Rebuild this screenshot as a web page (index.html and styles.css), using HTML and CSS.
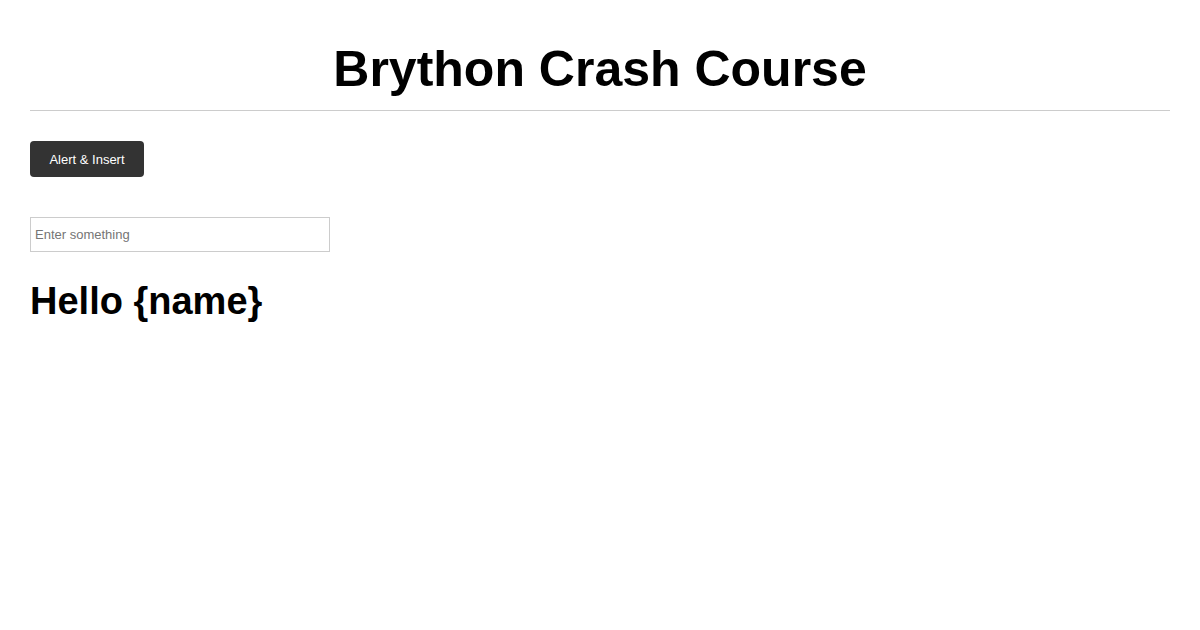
FILE: index.html
```html
<!DOCTYPE html>
<html lang="en">
<head>
<meta charset="utf-8">
<title>Brython Crash Course</title>
<link rel="stylesheet" href="styles.css">
</head>
<body>
<div class="page">
  <header class="header">
    <h1 class="title">Brython Crash Course</h1>
  </header>
  <div class="actions">
    <button class="btn" type="button">Alert &amp; Insert</button>
  </div>
  <div class="field">
    <input class="text-input" type="text" placeholder="Enter something">
  </div>
  <h2 class="greeting">Hello {name}</h2>
</div>
</body>
</html>
```

FILE: styles.css
```css
html, body {
  margin: 0;
  padding: 0;
  background: #fff;
}
body {
  font-family: "Liberation Sans", Arial, sans-serif;
  color: #000;
}
.page {
  padding: 39px 30px 0;
}
.header {
  border-bottom: 1px solid #ccc;
  padding-bottom: 11px;
}
.title {
  margin: 0;
  font-size: 50px;
  line-height: 60px;
  font-weight: bold;
  text-align: center;
}
.actions {
  margin-top: 30px;
}
.btn {
  display: block;
  width: 114px;
  height: 36px;
  background: #333;
  color: #fff;
  border: 0;
  border-radius: 4px;
  font-family: "Liberation Sans", Arial, sans-serif;
  font-size: 13px;
  padding: 0;
  cursor: pointer;
}
.field {
  margin-top: 40px;
}
.text-input {
  display: block;
  box-sizing: border-box;
  width: 300px;
  height: 35px;
  border: 1px solid #ccc;
  padding: 0 4px;
  font-family: "Liberation Sans", Arial, sans-serif;
  font-size: 13px;
  outline: none;
}
.text-input::placeholder {
  color: #757575;
}
.greeting {
  margin: 27px 0 0;
  font-size: 38px;
  line-height: 44px;
  font-weight: bold;
}
```
